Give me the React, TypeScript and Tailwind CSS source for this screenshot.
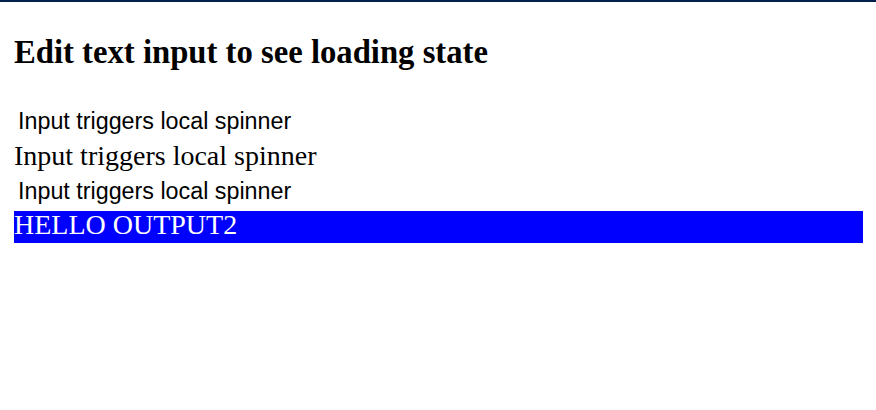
export default function App() {
  return (
    <div className="min-h-[410px] bg-white border-t-2 border-[#002050]">
      <div className="px-[14px] pt-[32px]">
        <h1 className="font-['Liberation_Serif',serif] font-bold text-[32.7px] leading-[36px] text-black mb-[34px]">
          Edit text input to see loading state
        </h1>
        <input
          readOnly
          value="Input triggers local spinner"
          className="block w-full px-[4px] h-[34px] font-['Liberation_Sans',sans-serif] text-[23.3px] text-black outline-none"
        />
        <div className="mt-[2px] h-[32px] font-['Liberation_Serif',serif] text-[28px] leading-[32px] text-black">
          Input triggers local spinner
        </div>
        <input
          readOnly
          value="Input triggers local spinner"
          className="block w-full mt-[2px] px-[4px] h-[34px] font-['Liberation_Sans',sans-serif] text-[23.3px] text-black outline-none"
        />
        <div className="mt-[3px] h-[32px] bg-[#0000ff] text-white font-['Liberation_Serif',serif] text-[28px] leading-[28px] mr-[-1px]">
          HELLO OUTPUT2
        </div>
      </div>
    </div>
  )
}
